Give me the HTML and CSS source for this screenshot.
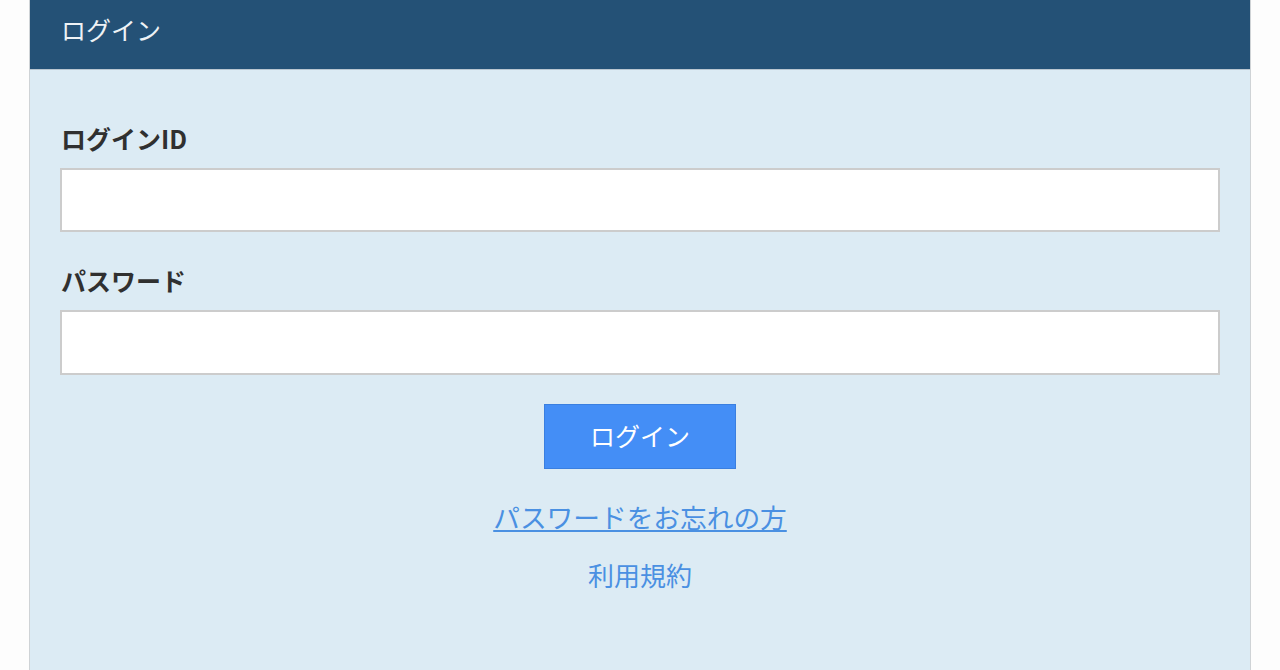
FILE: index.html
```html
<!DOCTYPE html>
<html lang="ja">
<head>
<meta charset="utf-8">
<title>ログイン</title>
<link rel="stylesheet" href="styles.css">
</head>
<body>
<div class="card">
  <div class="card-header">ログイン</div>
  <div class="card-body">
    <label class="label" for="id">ログインID</label>
    <input class="input input-id" id="id" type="text">
    <label class="label" for="pw">パスワード</label>
    <input class="input input-pw" id="pw" type="password">
    <div class="actions">
      <button class="btn" type="button">ログイン</button>
      <a class="link forgot" href="#">パスワードをお忘れの方</a>
      <a class="link terms" href="#">利用規約</a>
    </div>
  </div>
</div>
</body>
</html>
```
FILE: styles.css
```css
html, body {
  margin: 0;
  padding: 0;
  background: #fdfdfd;
  font-family: "Noto Sans CJK JP", "Noto Sans", sans-serif;
}
.card {
  margin: 0 29px;
  border-left: 1px solid #cfd3d6;
  border-right: 1px solid #cfd3d6;
  background: #dcebf4;
  min-height: 670px;
  box-sizing: border-box;
}
.card-header {
  height: 69px;
  background: #245176;
  border-bottom: 1px solid #b9c6d0;
  color: #eef2f5;
  font-size: 25px;
  line-height: 58px;
  padding-left: 31px;
}
.card-body {
  padding: 50px 30px 40px 30px;
  display: flex;
  flex-direction: column;
}
.label {
  font-size: 25px;
  font-weight: bold;
  color: #303030;
  line-height: 36px;
  margin-left: 1px;
  margin-bottom: 12px;
}
.input {
  height: 64px;
  box-sizing: border-box;
  border: 2px solid #cccccc;
  background: #fff;
  margin: 0;
  padding: 0 10px;
  font-size: 20px;
}
.input-id { margin-bottom: 30px; }
.input-pw { height: 65px; margin-bottom: 29px; }
.actions {
  display: flex;
  flex-direction: column;
  align-items: center;
}
.btn {
  width: 192px;
  height: 65px;
  background: #448ef6;
  border: 1px solid #3a7fe0;
  color: #fff;
  font-family: inherit;
  font-size: 25px;
  line-height: 58px;
  padding: 0 0 4px 0;
  margin-bottom: 30px;
}
.link {
  color: #4a90e2;
  line-height: 36px;
}
.forgot {
  font-size: 26.7px;
  text-decoration: underline;
  margin-bottom: 22px;
}
.terms {
  font-size: 26px;
  text-decoration: none;
}
```
